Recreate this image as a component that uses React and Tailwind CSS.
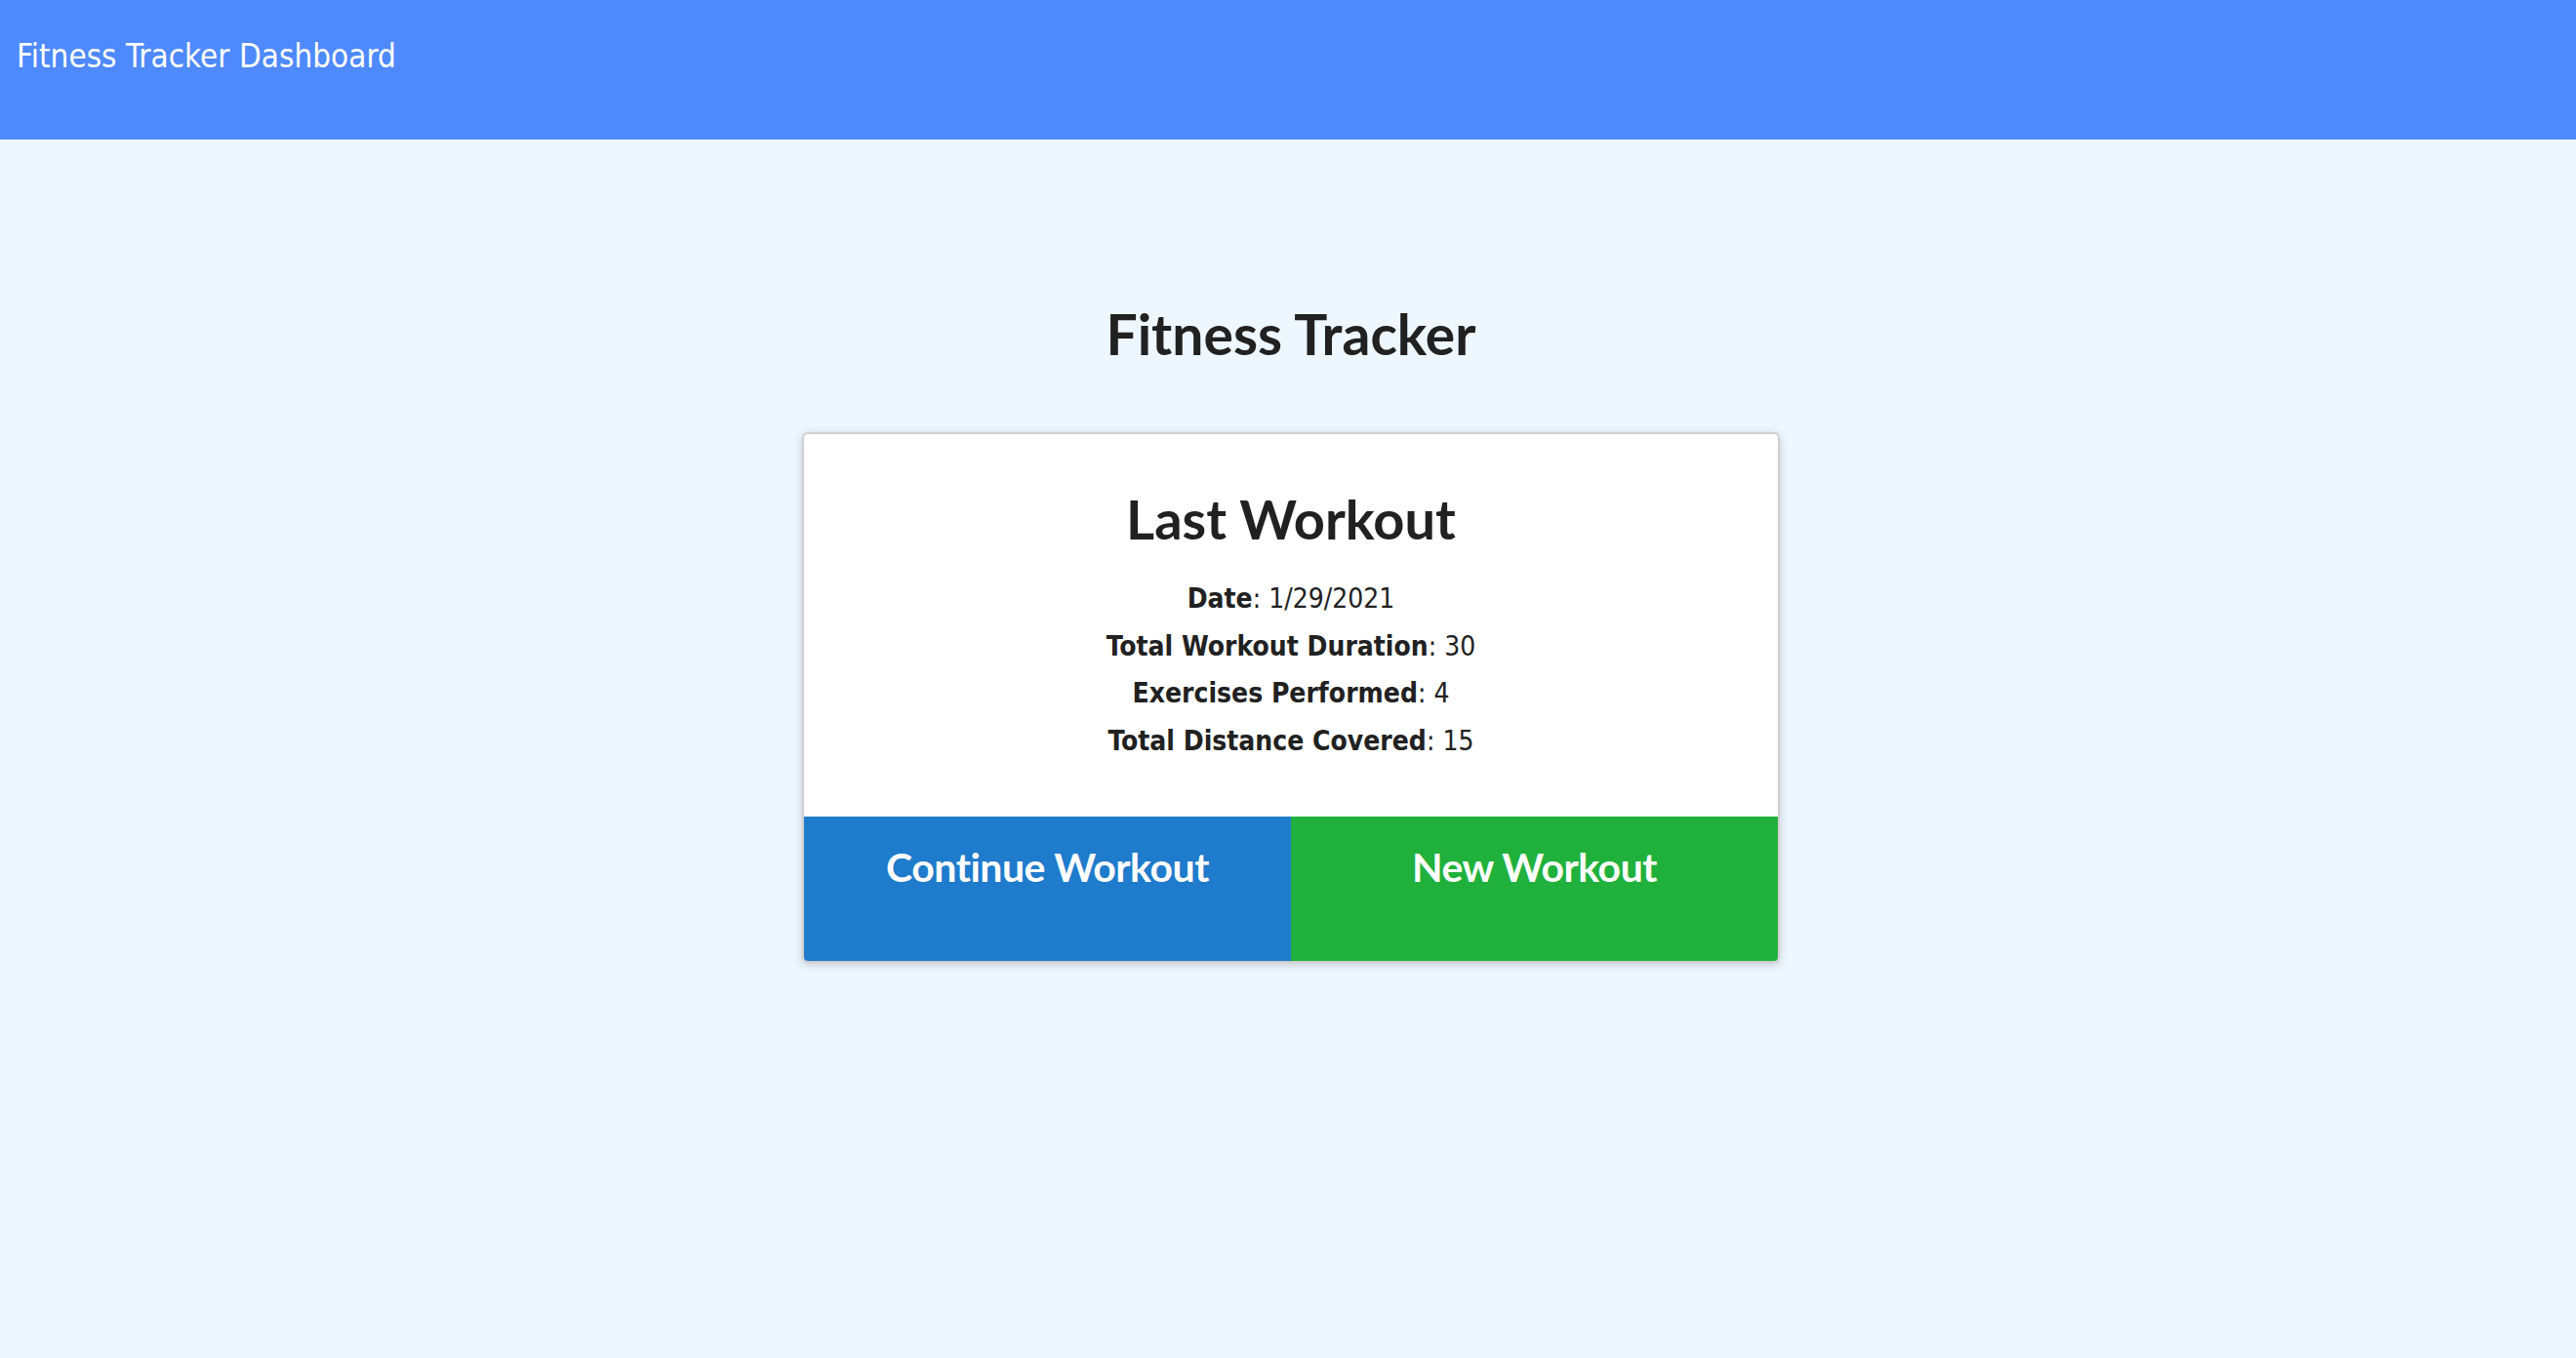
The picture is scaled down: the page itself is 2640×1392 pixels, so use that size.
const lastWorkout = [
  { label: 'Date', value: '1/29/2021' },
  { label: 'Total Workout Duration', value: '30' },
  { label: 'Exercises Performed', value: '4' },
  { label: 'Total Distance Covered', value: '15' },
];

export default function App() {
  return (
    <div className="min-h-screen bg-[#eef6fe] text-[#212121]">
      {/* top bar */}
      <nav className="h-[143px] bg-[#4e89fd] px-[17px] pt-[39px]">
        <span className="font-['DejaVu_Sans_Condensed','DejaVu_Sans',sans-serif] text-[33px] leading-[38px] text-white">
          Fitness Tracker Dashboard
        </span>
      </nav>

      <main className="flex flex-col items-center pt-[163px] pl-[6px]">
        <h1 className="font-['Lato',sans-serif] text-[57px] font-bold leading-[72px]">Fitness Tracker</h1>

        <div className="mt-[65px] w-[1002px] overflow-hidden rounded-md border-2 border-[#cfcfcf] bg-white shadow-[0_2px_10px_rgba(0,0,0,0.18)]">
          <div className="flex flex-col items-center pt-[51px] pb-[53px]">
            <h2 className="font-['Lato',sans-serif] text-[56px] font-bold leading-[72px]">Last Workout</h2>
            <div className="mt-[22px] flex flex-col items-center font-['DejaVu_Sans_Condensed','DejaVu_Sans',sans-serif] text-[28px] leading-[48.5px]">
              {lastWorkout.map((row) => (
                <p key={row.label}>
                  <strong className="font-bold">{row.label}</strong>: {row.value}
                </p>
              ))}
            </div>
          </div>

          <div className="grid grid-cols-2 font-['Lato',sans-serif] text-[41px] font-bold text-white">
            <button className="flex h-[148px] items-start justify-center bg-[#1f7bcb] pt-[24px] leading-[56px] tracking-[-0.5px]">
              Continue Workout
            </button>
            <button className="flex h-[148px] items-start justify-center bg-[#20b13c] pt-[24px] leading-[56px] tracking-[-0.5px]">
              New Workout
            </button>
          </div>
        </div>
      </main>
    </div>
  );
}
